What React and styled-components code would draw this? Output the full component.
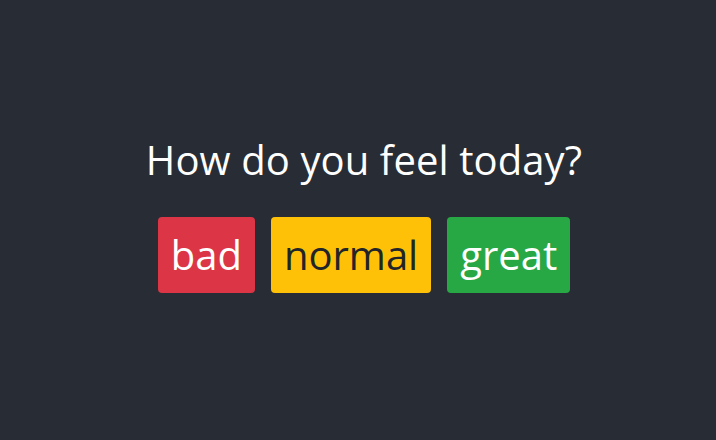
import React from "react";
import styled, { createGlobalStyle } from "styled-components";

const GlobalStyle = createGlobalStyle`
  html, body {
    margin: 0;
    padding: 0;
    background-color: #282c34;
  }
  * {
    box-sizing: border-box;
  }
`;

const moods = [
  { label: "bad", variant: "danger" },
  { label: "normal", variant: "warning" },
  { label: "great", variant: "success" },
];

const colors = {
  danger: { bg: "#dc3545", fg: "#ffffff" },
  warning: { bg: "#ffc107", fg: "#212529" },
  success: { bg: "#28a745", fg: "#ffffff" },
};

const App = () => {
  return (
    <Page>
      <GlobalStyle />
      <Title>How do you feel today?</Title>
      <Buttons>
        {moods.map((mood) => (
          <MoodButton key={mood.label} $variant={mood.variant}>
            {mood.label}
          </MoodButton>
        ))}
      </Buttons>
    </Page>
  );
};

const Page = styled.div`
  min-height: 100vh;
  width: 100%;
  display: flex;
  flex-direction: column;
  align-items: center;
  justify-content: center;
  padding: 0 0 11px 12px;
  background-color: #282c34;
  color: #ffffff;
  font-family: "Open Sans", "Noto Sans", sans-serif;
`;

const Title = styled.h1`
  margin: 0 0 33px 0;
  font-size: 40px;
  font-weight: 400;
  line-height: 48px;
  letter-spacing: 0.1px;
`;

const Buttons = styled.div`
  display: flex;
  gap: 16px;
`;

const MoodButton = styled.button`
  font-family: inherit;
  font-size: 40px;
  font-weight: 400;
  line-height: 60px;
  padding: 8px 13px;
  border: none;
  border-radius: 4px;
  cursor: pointer;
  background-color: ${(p) => colors[p.$variant].bg};
  color: ${(p) => colors[p.$variant].fg};
`;

export default App;
